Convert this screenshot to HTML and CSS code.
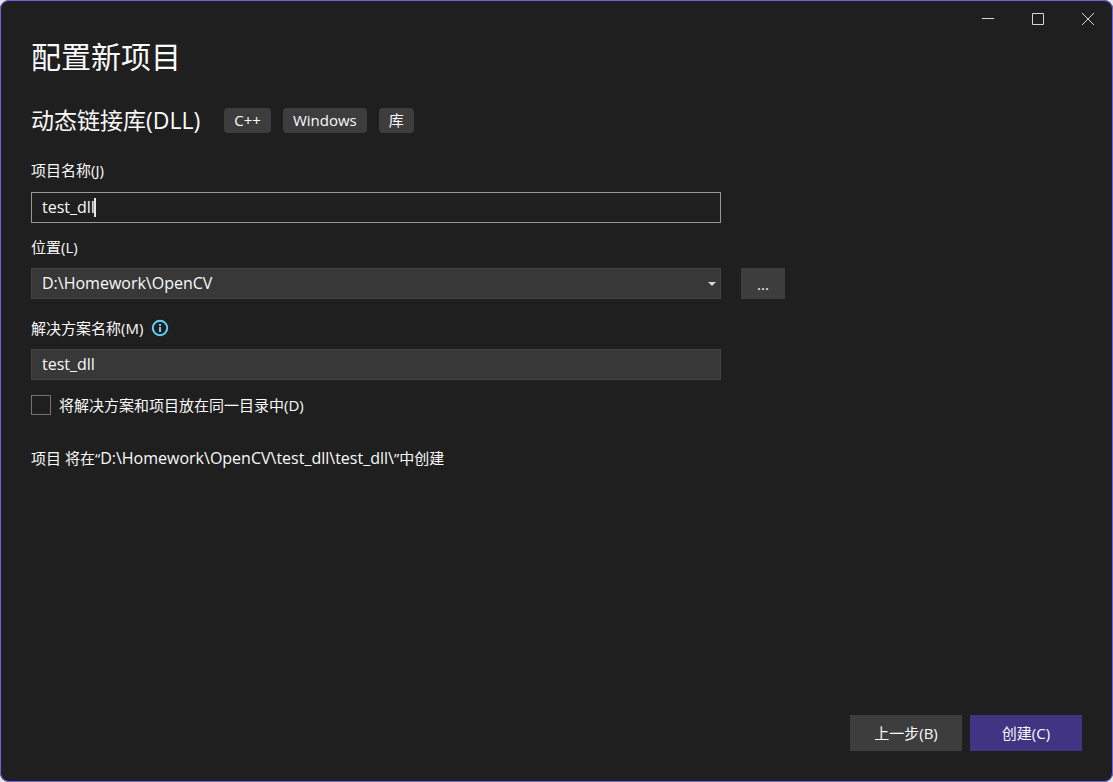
FILE: index.html
```html
<!DOCTYPE html>
<html lang="zh-CN">
<head>
    <meta charset="UTF-8">
    <title>配置新项目</title>
    <link rel="stylesheet" href="styles.css">
</head>
<body>
    <div class="window">
        <div class="titlebar">
            <button class="win-btn" aria-label="最小化">
                <svg width="14" height="14" viewBox="0 0 14 14"><path d="M1 6.5h12"/></svg>
            </button>
            <button class="win-btn" aria-label="最大化">
                <svg width="14" height="14" viewBox="0 0 14 14"><path d="M1.5 1.5h11v11h-11z"/></svg>
            </button>
            <button class="win-btn" aria-label="关闭">
                <svg width="14" height="14" viewBox="0 0 14 14"><path d="M1 1l12 12M13 1L1 13"/></svg>
            </button>
        </div>

        <form class="content">
            <h1>配置新项目</h1>
            <div class="template">
                <h2>动态链接库(DLL)</h2>
                <div class="tags">
                    <span class="tag">C++</span>
                    <span class="tag">Windows</span>
                    <span class="tag">库</span>
                </div>
            </div>

            <div class="field">
                <label for="name">项目名称(J)</label>
                <div class="box">
                    <input class="text active" id="name" type="text" value="test_dll">
                    <span class="caret"></span>
                </div>
            </div>

            <div class="field">
                <label for="location">位置(L)</label>
                <div class="row">
                    <div class="box">
                        <select class="text" id="location">
                            <option>D:\Homework\OpenCV</option>
                        </select>
                        <svg class="arrow" width="8" height="4" viewBox="0 0 8 4"><path d="M0 0h8L4 4z"/></svg>
                    </div>
                    <button class="browse" type="button">...</button>
                </div>
            </div>

            <div class="field">
                <div class="label-row">
                    <label for="solution">解决方案名称(M)</label>
                    <svg class="info" width="18" height="18" viewBox="0 0 18 18">
                        <circle cx="9" cy="9" r="7.2"/>
                        <path d="M9 8v5M9 5v2"/>
                    </svg>
                </div>
                <div class="box">
                    <input class="text" id="solution" type="text" value="test_dll">
                </div>
            </div>

            <div class="check">
                <input id="same-dir" type="checkbox">
                <label for="same-dir">将解决方案和项目放在同一目录中(D)</label>
            </div>

            <p>项目 将在“<span class="path">D:\Homework\OpenCV\test_dll\test_dll\</span>”中创建</p>
        </form>

        <div class="footer">
            <button>上一步(B)</button>
            <button class="primary">创建(C)</button>
        </div>
    </div>
</body>
</html>
```

FILE: styles.css
```css
* {
    box-sizing: border-box;
}
body {
    margin: 0;
    background: #e6e6e6;
    color: #fafafa;
    font-family: "Open Sans", "Noto Sans CJK SC", sans-serif;
    font-size: 15px;
    line-height: 20px;
}
button, input, select {
    font: inherit;
    color: inherit;
    margin: 0;
    outline: none;
}
.window {
    min-height: 100vh;
    display: flex;
    flex-direction: column;
    background: #1f1f1f;
    border-radius: 9px;
    box-shadow: inset 0 0 0 1px #7160e8;
}
.titlebar {
    display: flex;
    justify-content: flex-end;
}
.win-btn {
    width: 50px;
    height: 37px;
    padding: 0;
    display: flex;
    align-items: center;
    justify-content: center;
    background: none;
    border: none;
}
.win-btn svg {
    fill: none;
    stroke: #d6d6d6;
}
.content {
    flex: 1;
    padding: 0 31px;
}
h1 {
    margin: 0;
    font-size: 30px;
    font-weight: 400;
    line-height: 40px;
}
.template {
    display: flex;
    align-items: center;
    gap: 24px;
    margin: 27px 0 24px;
}
h2 {
    margin: 0;
    font-size: 23px;
    font-weight: 400;
    line-height: 32px;
}
.tags {
    display: flex;
    gap: 12px;
}
.tag {
    padding: 0 10px;
    font-size: 15px;
    line-height: 25px;
    background: #3d3d3d;
    border-radius: 4px;
}
.field {
    margin-bottom: 14px;
}
.field label {
    display: block;
}
.label-row {
    display: flex;
    align-items: center;
    gap: 8px;
    margin-top: 19px;
}
.info {
    fill: none;
    stroke: #61d0f5;
    stroke-width: 2;
}
.box {
    position: relative;
    width: 690px;
    margin-top: 12px;
}
.row {
    display: flex;
    gap: 20px;
    margin-top: 11px;
}
.row .box {
    margin-top: 0;
}
.label-row + .box {
    margin-top: 11px;
}
.text {
    display: block;
    width: 100%;
    height: 31px;
    padding: 0 10px 2px;
    font-size: 16px;
    background: #383838;
    border: 1px solid #424242;
    border-radius: 0;
    appearance: none;
}
.text.active {
    background: #1f1f1f;
    border-color: #999;
}
.caret {
    position: absolute;
    top: 6px;
    left: 63px;
    width: 2px;
    height: 19px;
    background: #e6e6e6;
}
.arrow {
    position: absolute;
    top: 14px;
    right: 5px;
    fill: #d6d6d6;
}
.browse {
    width: 44px;
    padding: 0;
    background: #3d3d3d;
    border: none;
}
.check {
    display: flex;
    align-items: center;
    gap: 8px;
    margin-top: 15px;
}
.check input {
    appearance: none;
    width: 20px;
    height: 20px;
    border: 1px solid #757575;
}
p {
    margin: 33px 0 0;
}
.path {
    font-size: 16px;
}
.footer {
    display: flex;
    justify-content: flex-end;
    gap: 8px;
    padding: 0 31px 31px;
}
.footer button {
    width: 112px;
    height: 36px;
    background: #3d3d3d;
    border: none;
}
.footer .primary {
    background: #413583;
}
```
